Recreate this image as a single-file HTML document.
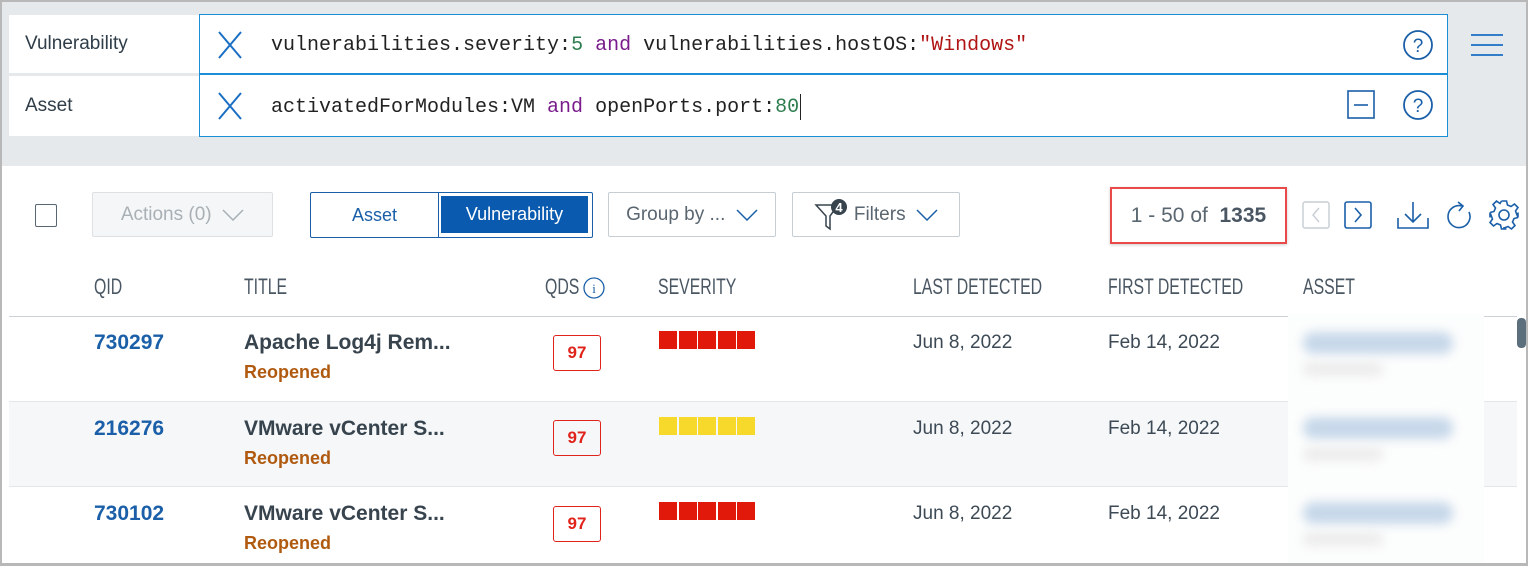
<!DOCTYPE html>
<html><head><style>
*{margin:0;padding:0;box-sizing:border-box}
body{width:1528px;height:566px;overflow:hidden;background:#fff;font-family:"Liberation Sans",sans-serif;position:relative;color:#3d4a55}
.a{position:absolute}
.frame{left:0;top:0;width:1528px;height:566px;border:2px solid #b8b8b8;border-bottom-width:3px;pointer-events:none;z-index:10}
.band{left:0;top:0;width:1528px;height:166px;background:#e5e9ec}
.lbl{left:9px;width:190px;background:#fff;font-size:19px;color:#2f3d48;padding-left:16px;display:flex;align-items:center}
.inp{left:199px;width:1249px;background:#fff;border:1.5px solid #1a8fd6;font-family:"Liberation Mono",monospace;font-size:20px;color:#222;display:flex;align-items:center;padding-left:71px;padding-top:3px}
.kw{color:#7a1c8c}.num{color:#2e7d4f}.str{color:#b01515}
.btn{border:1px solid #c6cdd3;border-radius:2px;background:#fff;display:flex;align-items:center;justify-content:center;font-size:19px;color:#5a6670}
.hd{top:274px;font-size:22px;color:#4a5763;transform:scaleX(.72);transform-origin:left;white-space:nowrap}
.row{left:9px;width:1508px;height:85px;border-bottom:1px solid #e3e7ea}
.qid{font-size:21px;font-weight:bold;color:#1a5fa8}
.ttl{font-size:21px;font-weight:bold;color:#37434d}
.reo{font-size:18px;color:#b05a10;font-weight:bold}
.qds{width:48px;height:36px;border:1.5px solid #e0231b;border-radius:3px;color:#e0231b;font-weight:bold;font-size:17px;display:flex;align-items:center;justify-content:center}
.sev span{display:inline-block;width:18px;height:18px;margin-right:1.5px}
.dt{font-size:19px;color:#3d4a55}
.blur{left:1288px;width:196px;height:250px;background:#fcfdfd}
.bl{position:absolute;left:15px;width:150px;height:22px;border-radius:11px;background:#c7d8ea;filter:blur(5px)}
.bl2{position:absolute;left:15px;width:80px;height:14px;border-radius:7px;background:#ececec;filter:blur(5px)}
</style></head><body>
<div class="a band"></div>
<div class="a lbl" style="top:15px;height:58px">Vulnerability</div>
<div class="a lbl" style="top:76px;height:60px">Asset</div>
<div class="a inp" style="top:14px;height:60px">vulnerabilities.severity:<span class="num">5</span>&nbsp;<span class="kw">and</span>&nbsp;vulnerabilities.hostOS:<span class="str">"Windows"</span></div>
<div class="a inp" style="top:74px;height:63px">activatedForModules:VM&nbsp;<span class="kw">and</span>&nbsp;openPorts.port:<span class="num">80</span><span style="display:inline-block;width:1px;height:26px;background:#222;margin-left:1px"></span></div>
<svg class="a" style="left:216px;top:30px" width="28" height="30"><path d="M3 2L25 28M25 2L3 28" stroke="#1a6fc4" stroke-width="2"/></svg>
<svg class="a" style="left:216px;top:91px" width="28" height="30"><path d="M3 2L25 28M25 2L3 28" stroke="#1a6fc4" stroke-width="2"/></svg>
<svg class="a" style="left:1402px;top:29px" width="32" height="32"><circle cx="16" cy="16" r="14" fill="none" stroke="#1a5fa8" stroke-width="1.8"/><text x="16" y="23" font-size="19" text-anchor="middle" fill="#1a5fa8" font-family="Liberation Sans">?</text></svg>
<svg class="a" style="left:1402px;top:89px" width="32" height="32"><circle cx="16" cy="16" r="14" fill="none" stroke="#1a5fa8" stroke-width="1.8"/><text x="16" y="23" font-size="19" text-anchor="middle" fill="#1a5fa8" font-family="Liberation Sans">?</text></svg>
<svg class="a" style="left:1347px;top:90px" width="30" height="30"><rect x="1" y="1" width="26" height="27" fill="none" stroke="#1a5fa8" stroke-width="1.6"/><path d="M7 15H21" stroke="#1a5fa8" stroke-width="1.6"/></svg>
<svg class="a" style="left:1470px;top:32px" width="34" height="26"><path d="M1 3H33M1 13H33M1 23H33" stroke="#1a6fc4" stroke-width="1.8"/></svg>

<div class="a" style="left:35px;top:204px;width:22px;height:23px;border:1.5px solid #5a6670;border-radius:2px"></div>
<div class="a btn" style="left:92px;top:192px;width:181px;height:45px;background:#f5f6f7;color:#a8b0b6;border-color:#dde1e4">Actions (0)&nbsp;&nbsp;<svg width="22" height="12"><path d="M1 1L11 11L21 1" fill="none" stroke="#a8b0b6" stroke-width="1.5"/></svg></div>
<div class="a" style="left:310px;top:192px;width:283px;height:46px;border:1.5px solid #1a5fa8;border-radius:2px"></div>
<div class="a" style="left:311px;top:193px;width:127px;height:44px;display:flex;align-items:center;justify-content:center;font-size:18px;color:#1a5fa8">Asset</div>
<div class="a" style="left:438px;top:193px;width:1px;height:44px;background:#1a5fa8"></div>
<div class="a" style="left:441px;top:196px;width:147px;height:37px;background:#0a5bb0;color:#fff;display:flex;align-items:center;justify-content:center;font-size:18px">Vulnerability</div>
<div class="a btn" style="left:608px;top:192px;width:168px;height:45px">Group by ...&nbsp;&nbsp;<svg width="22" height="12"><path d="M1 1L11 11L21 1" fill="none" stroke="#1a5fa8" stroke-width="1.5"/></svg></div>
<div class="a btn" style="left:792px;top:192px;width:168px;height:45px"><svg width="36" height="36" style="margin-right:4px"><path d="M2 8H24L16 19V32L12 29V19Z" fill="none" stroke="#37434d" stroke-width="1.5"/><circle cx="25" cy="10" r="8" fill="#37434d"/><text x="25" y="15" font-size="13" font-weight="bold" text-anchor="middle" fill="#fff" font-family="Liberation Sans">4</text></svg>Filters&nbsp;&nbsp;<svg width="22" height="12"><path d="M1 1L11 11L21 1" fill="none" stroke="#1a5fa8" stroke-width="1.5"/></svg></div>
<div class="a" style="left:1110px;top:187px;width:177px;height:57px;border:2px solid #e84a4a;box-shadow:0 1px 3px rgba(0,0,0,.2);display:flex;align-items:center;justify-content:center;font-size:21px;color:#5a6670">1 - 50 of&nbsp;&nbsp;<b style="color:#4a5763">1335</b></div>
<svg class="a" style="left:1302px;top:201px" width="28" height="28"><rect x="1" y="1" width="26" height="26" rx="2" fill="none" stroke="#c6cdd3" stroke-width="1.4"/><path d="M17 7L11 14L17 21" fill="none" stroke="#c6cdd3" stroke-width="1.4"/></svg>
<svg class="a" style="left:1344px;top:201px" width="28" height="28"><rect x="1" y="1" width="26" height="26" rx="2" fill="none" stroke="#1a5fa8" stroke-width="1.6"/><path d="M11 7L17 14L11 21" fill="none" stroke="#1a5fa8" stroke-width="1.6"/></svg>
<svg class="a" style="left:1396px;top:200px" width="34" height="30"><path d="M17 2V22M9 14L17 22L25 14M2 18V28H32V18" fill="none" stroke="#1a5fa8" stroke-width="1.6"/></svg>
<svg class="a" style="left:1444px;top:200px" width="30" height="32"><path d="M18 6A11 11 0 1 0 25 12" fill="none" stroke="#1a5fa8" stroke-width="1.6"/><path d="M14 2L19 6L15 11" fill="none" stroke="#1a5fa8" stroke-width="1.6"/></svg>
<svg class="a" style="left:1488px;top:199px" width="34" height="32"><g transform="translate(16,16)" fill="none" stroke="#1a5fa8" stroke-width="1.6"><circle r="5"/><path d="M-2.5 -14H2.5L3.5 -10L7 -8.5L10.5 -11L14 -7.5L11.5 -4L13 0L13 0L14 2.5V-2.5M14 2.5L10 3.5L8.5 7L11 10.5L7.5 14L4 11.5L0 13L-1 13M2.5 14H-2.5L-3.5 10L-7 8.5L-10.5 11L-14 7.5L-11.5 4L-13 0L-14 -2.5V2.5M-14 -2.5L-10 -3.5L-8.5 -7L-11 -10.5L-7.5 -14L-4 -11.5L-2.5 -14"/></g></svg>

<div class="a hd" style="left:94px">QID</div>
<div class="a hd" style="left:244px">TITLE</div>
<div class="a hd" style="left:545px">QDS</div>
<svg class="a" style="left:582px;top:276px" width="24" height="24"><circle cx="12" cy="12" r="10" fill="none" stroke="#1a5fa8" stroke-width="1.3"/><text x="12" y="17" font-size="13" text-anchor="middle" fill="#1a5fa8" font-family="Liberation Serif">i</text></svg>
<div class="a hd" style="left:658px">SEVERITY</div>
<div class="a hd" style="left:913px">LAST DETECTED</div>
<div class="a hd" style="left:1108px">FIRST DETECTED</div>
<div class="a hd" style="left:1303px">ASSET</div>
<div class="a" style="left:9px;top:316px;width:1508px;height:1px;background:#ccd2d7"></div>

<div class="a row" style="top:317px"></div>
<div class="a row" style="top:402px;background:#f5f7f9"></div>
<div class="a row" style="top:487px;border:none"></div>

<div class="a qid" style="left:94px;top:331px">730297</div>
<div class="a ttl" style="left:244px;top:331px">Apache Log4j Rem...</div>
<div class="a reo" style="left:244px;top:362px">Reopened</div>
<div class="a qds" style="left:553px;top:335px">97</div>
<div class="a sev" style="left:659px;top:331px"><span style="background:#e0190a"></span><span style="background:#e0190a"></span><span style="background:#e0190a"></span><span style="background:#e0190a"></span><span style="background:#e0190a"></span></div>
<div class="a dt" style="left:913px;top:332px">Jun 8, 2022</div>
<div class="a dt" style="left:1108px;top:332px">Feb 14, 2022</div>

<div class="a qid" style="left:94px;top:417px">216276</div>
<div class="a ttl" style="left:244px;top:417px">VMware vCenter S...</div>
<div class="a reo" style="left:244px;top:448px">Reopened</div>
<div class="a qds" style="left:553px;top:420px">97</div>
<div class="a sev" style="left:659px;top:417px"><span style="background:#f7d92c"></span><span style="background:#f7d92c"></span><span style="background:#f7d92c"></span><span style="background:#f7d92c"></span><span style="background:#f7d92c"></span></div>
<div class="a dt" style="left:913px;top:418px">Jun 8, 2022</div>
<div class="a dt" style="left:1108px;top:418px">Feb 14, 2022</div>

<div class="a qid" style="left:94px;top:502px">730102</div>
<div class="a ttl" style="left:244px;top:502px">VMware vCenter S...</div>
<div class="a reo" style="left:244px;top:533px">Reopened</div>
<div class="a qds" style="left:553px;top:506px">97</div>
<div class="a sev" style="left:659px;top:502px"><span style="background:#e0190a"></span><span style="background:#e0190a"></span><span style="background:#e0190a"></span><span style="background:#e0190a"></span><span style="background:#e0190a"></span></div>
<div class="a dt" style="left:913px;top:503px">Jun 8, 2022</div>
<div class="a dt" style="left:1108px;top:503px">Feb 14, 2022</div>

<div class="a blur" style="top:314px"><div class="bl" style="top:18px"></div><div class="bl2" style="top:48px"></div><div class="bl" style="top:103px"></div><div class="bl2" style="top:133px"></div><div class="bl" style="top:188px"></div><div class="bl2" style="top:218px"></div></div>
<div class="a" style="left:1517px;top:318px;width:9px;height:30px;border-radius:4px;background:#5b6f7c"></div>
<div class="a frame"></div>
</body></html>
